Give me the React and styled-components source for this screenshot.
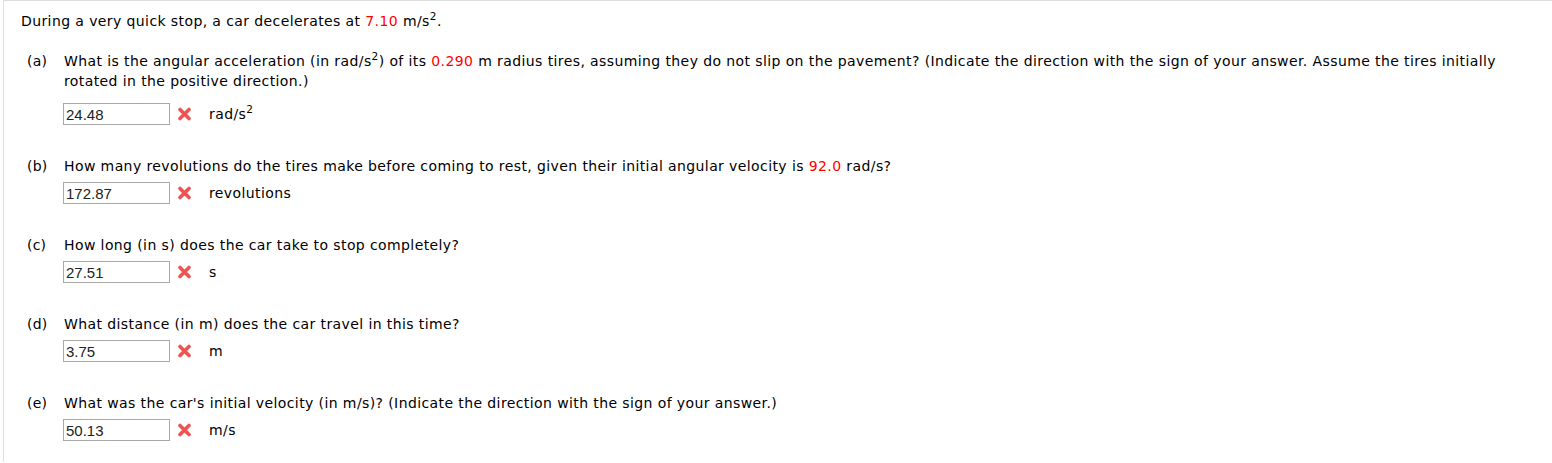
import React from 'react';
import styled, { createGlobalStyle } from 'styled-components';

const GlobalStyle = createGlobalStyle`
  body {
    margin: 0;
    background: #fff;
  }
`;

const Panel = styled.div`
  margin-left: 3px;
  border-top: 1px solid #dedede;
  border-left: 1px solid #dedede;
  padding: 10px 0 21px 17px;
  font-family: 'DejaVu Sans', Verdana, sans-serif;
  font-size: 14px;
  letter-spacing: 0.4px;
  color: #000;
`;

const Stem = styled.p`
  margin: 0 0 20px;
  line-height: 20px;
`;

const Given = styled.span`
  color: #ff0000;
`;

const Sup = styled.sup`
  font-size: 10.5px;
  line-height: 0;
  vertical-align: 6px;
`;

const Part = styled.div`
  display: grid;
  grid-template-columns: 37px 1fr;
  padding-left: 6px;
  margin-bottom: 31px;

  &:last-child {
    margin-bottom: 0;
  }
`;

const Label = styled.span`
  line-height: 20px;
  letter-spacing: 0.2px;
`;

const Body = styled.div`
  min-width: 0;
`;

const Question = styled.div`
  line-height: 20px;
  max-width: 1450px;
`;

const AnswerRow = styled.div`
  display: flex;
  align-items: center;
  margin-top: ${props => (props.$tall ? '12px' : '6px')};
  margin-left: -1px;
`;

const Field = styled.input`
  box-sizing: border-box;
  width: 107px;
  height: 22px;
  border: 1px solid #a9a9a9;
  padding: 0 2px;
  font-family: 'Liberation Sans', Arial, sans-serif;
  font-size: 15px;
  letter-spacing: 0;
  color: #222;
  background: #fff;
  outline: none;
`;

const Mark = styled.svg`
  margin-left: 7px;
  width: 15px;
  height: 14px;
  flex-shrink: 0;
`;

const Unit = styled.span`
  margin-left: 17px;
  line-height: 20px;
`;

const WrongMark = () => (
  <Mark viewBox="0 0 15 14">
    <path
      d="M3 2.5 L12 11.5 M12 2.5 L3 11.5"
      stroke="#f05252"
      strokeWidth="3.6"
      strokeLinecap="round"
    />
  </Mark>
);

const parts = [
  {
    key: 'a',
    question: (
      <>
        What is the angular acceleration (in rad/s<Sup>2</Sup>) of its{' '}
        <Given>0.290</Given> m radius tires, assuming they do not slip on the pavement? (Indicate
        the direction with the sign of your answer. Assume the tires initially rotated in the
        positive direction.)
      </>
    ),
    value: '24.48',
    unit: (
      <>
        rad/s<Sup>2</Sup>
      </>
    ),
    tall: true,
  },
  {
    key: 'b',
    question: (
      <>
        How many revolutions do the tires make before coming to rest, given their initial angular
        velocity is <Given>92.0</Given> rad/s?
      </>
    ),
    value: '172.87',
    unit: 'revolutions',
  },
  {
    key: 'c',
    question: 'How long (in s) does the car take to stop completely?',
    value: '27.51',
    unit: 's',
  },
  {
    key: 'd',
    question: 'What distance (in m) does the car travel in this time?',
    value: '3.75',
    unit: 'm',
  },
  {
    key: 'e',
    question:
      "What was the car's initial velocity (in m/s)? (Indicate the direction with the sign of your answer.)",
    value: '50.13',
    unit: 'm/s',
  },
];

const App = () => (
  <>
    <GlobalStyle />
    <Panel>
      <Stem>
        During a very quick stop, a car decelerates at <Given>7.10</Given> m/s<Sup>2</Sup>.
      </Stem>
      {parts.map(part => (
        <Part key={part.key}>
          <Label>({part.key})</Label>
          <Body>
            <Question>{part.question}</Question>
            <AnswerRow $tall={part.tall}>
              <Field type="text" defaultValue={part.value} readOnly />
              <WrongMark />
              <Unit>{part.unit}</Unit>
            </AnswerRow>
          </Body>
        </Part>
      ))}
    </Panel>
  </>
);

export default App;
